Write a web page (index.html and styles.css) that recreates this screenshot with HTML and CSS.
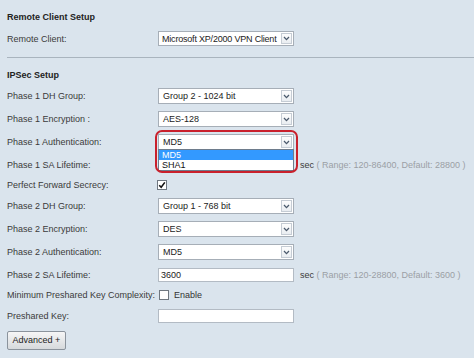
FILE: index.html
```html
<!DOCTYPE html>
<html lang="en">

<head>
  <meta charset="UTF-8">
  <title>IPSec Setup</title>
  <link rel="stylesheet" href="styles.css">
</head>

<body>
  <div class="page">
    <div class="sectionTitle">Remote Client Setup</div>
    <div class="row remoteRow">
      <div class="label">Remote Client:</div>
      <div class="select wide">
        <span class="value">Microsoft XP/2000 VPN Client</span>
        <span class="arrow"><svg width="7" height="5" viewBox="0 0 7 5"><path d="M1 1 L3.5 3.6 L6 1" /></svg></span>
      </div>
    </div>

    <div class="divider"></div>

    <div class="sectionTitle">IPSec Setup</div>
    <div class="rows">
      <div class="row">
        <div class="label">Phase 1 DH Group:</div>
        <div class="select">
          <span class="value">Group 2 - 1024 bit</span>
          <span class="arrow"><svg width="7" height="5" viewBox="0 0 7 5"><path d="M1 1 L3.5 3.6 L6 1" /></svg></span>
        </div>
      </div>
      <div class="row">
        <div class="label">Phase 1 Encryption :</div>
        <div class="select">
          <span class="value">AES-128</span>
          <span class="arrow"><svg width="7" height="5" viewBox="0 0 7 5"><path d="M1 1 L3.5 3.6 L6 1" /></svg></span>
        </div>
      </div>
      <div class="row">
        <div class="label">Phase 1 Authentication:</div>
        <div class="select open">
          <span class="value">MD5</span>
          <span class="arrow"><svg width="7" height="5" viewBox="0 0 7 5"><path d="M1 1 L3.5 3.6 L6 1" /></svg></span>
          <div class="dropList">
            <div class="option selected">MD5</div>
            <div class="option">SHA1</div>
          </div>
          <div class="highlight"></div>
        </div>
      </div>
      <div class="row inputRow">
        <div class="label">Phase 1 SA Lifetime:</div>
        <div class="input">28800</div>
        <div class="hint"><span class="unit">sec</span> ( Range: 120-86400, Default: 28800 )</div>
      </div>
      <div class="row checkRow">
        <div class="label">Perfect Forward Secrecy:</div>
        <span class="checkbox checked"><svg width="8" height="8" viewBox="0 0 8 8"><path d="M1.2 4.2 L3.2 6.3 L6.8 1.4" /></svg></span>
      </div>
      <div class="row">
        <div class="label">Phase 2 DH Group:</div>
        <div class="select">
          <span class="value">Group 1 - 768 bit</span>
          <span class="arrow"><svg width="7" height="5" viewBox="0 0 7 5"><path d="M1 1 L3.5 3.6 L6 1" /></svg></span>
        </div>
      </div>
      <div class="row">
        <div class="label">Phase 2 Encryption:</div>
        <div class="select">
          <span class="value">DES</span>
          <span class="arrow"><svg width="7" height="5" viewBox="0 0 7 5"><path d="M1 1 L3.5 3.6 L6 1" /></svg></span>
        </div>
      </div>
      <div class="row">
        <div class="label">Phase 2 Authentication:</div>
        <div class="select">
          <span class="value">MD5</span>
          <span class="arrow"><svg width="7" height="5" viewBox="0 0 7 5"><path d="M1 1 L3.5 3.6 L6 1" /></svg></span>
        </div>
      </div>
      <div class="row inputRow">
        <div class="label">Phase 2 SA Lifetime:</div>
        <div class="input">3600</div>
        <div class="hint"><span class="unit">sec</span> ( Range: 120-28800, Default: 3600 )</div>
      </div>
      <div class="row checkRow">
        <div class="label">Minimum Preshared Key Complexity:</div>
        <span class="checkbox unchecked"></span>
        <span class="checkText">Enable</span>
      </div>
      <div class="row inputRow">
        <div class="label">Preshared Key:</div>
        <div class="input"></div>
      </div>
    </div>

    <div class="button">Advanced +</div>
  </div>
</body>

</html>
```

FILE: styles.css
```css
html,
body {
  margin: 0;
  padding: 0;
}

body {
  background-color: #dae4ed;
  font-family: "Liberation Sans", Arial, sans-serif;
  font-size: 9px;
  color: #3a3a3a;
  width: 474px;
  height: 358px;
  overflow: hidden;
}

.page {
  padding: 10px 0 0 7px;
}

.sectionTitle {
  height: 14px;
  line-height: 14px;
  font-weight: bold;
  color: #222;
}

.row {
  display: flex;
  align-items: center;
  height: 16px;
}

.remoteRow {
  margin-top: 7px;
  height: 15px;
}

.divider {
  height: 1px;
  background-color: #a9b4be;
  margin: 11px 0 10px 0;
}

.rows {
  display: flex;
  flex-direction: column;
  gap: 7px;
  margin-top: 6px;
}

.inputRow {
  height: 15px;
}

.checkRow {
  height: 12px;
}

.label {
  width: 151px;
  flex-shrink: 0;
  white-space: nowrap;
}

.select {
  position: relative;
  display: flex;
  align-items: center;
  width: 136px;
  height: 100%;
  box-sizing: border-box;
  background-color: #fff;
  border: 1px solid #a6aeb7;
  color: #222;
}

.select .value {
  flex: 1;
  padding-left: 4px;
  white-space: nowrap;
  overflow: hidden;
}

.select.wide .value {
  padding-left: 3px;
  letter-spacing: -0.2px;
}

.select .arrow {
  display: flex;
  align-items: center;
  justify-content: center;
  flex-shrink: 0;
  width: 11px;
  height: calc(100% - 2px);
  margin-right: 1px;
  box-sizing: border-box;
  border: 1px solid #c5ccd4;
  background: linear-gradient(#fdfdfd, #e9edf1);
}

.select .arrow path {
  fill: none;
  stroke: #4b5a6c;
  stroke-width: 1.3;
}

.dropList {
  position: absolute;
  left: -1px;
  top: 14px;
  width: 136px;
  box-sizing: border-box;
  background-color: #fff;
  border: 1px solid #6e7c8c;
  z-index: 2;
}

.dropList .option {
  height: 10px;
  line-height: 10px;
  padding-left: 3px;
  color: #111;
}

.dropList .option.selected {
  background-color: #3399ff;
  color: #fff;
}

.highlight {
  position: absolute;
  left: -4px;
  top: -5px;
  width: 143px;
  height: 43px;
  box-sizing: border-box;
  border: 2px solid #c9202c;
  border-radius: 7px;
  z-index: 3;
}

.input {
  width: 136px;
  height: 14px;
  line-height: 12px;
  box-sizing: border-box;
  padding-left: 2px;
  background-color: #fff;
  border: 1px solid #b3bbc4;
  color: #222;
}

.hint {
  margin-left: 6px;
  color: #9a9fa5;
  white-space: nowrap;
}

.hint .unit {
  color: #3a3a3a;
}

.checkbox {
  display: flex;
  align-items: center;
  justify-content: center;
  width: 10px;
  height: 10px;
  box-sizing: border-box;
  background-color: #fff;
  border: 1px solid #6f7780;
}

.checkbox.checked {
  margin-left: -1px;
}

.checkbox.unchecked {
  margin-left: 1px;
}

.checkbox path {
  fill: none;
  stroke: #111;
  stroke-width: 1.6;
}

.checkText {
  margin-left: 5px;
  color: #333;
}

.button {
  display: inline-block;
  margin-top: 8px;
  width: 59px;
  height: 19px;
  line-height: 17px;
  box-sizing: border-box;
  text-align: center;
  border: 1px solid #8b939c;
  border-radius: 2px;
  background: linear-gradient(#f6f6f6, #d6d9dc);
  color: #222;
}
```
